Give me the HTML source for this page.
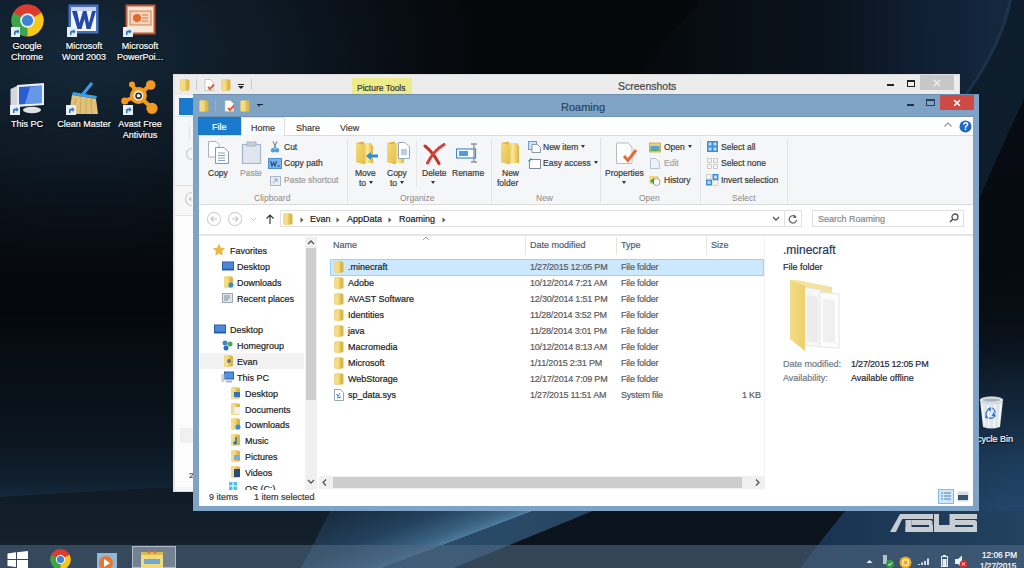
<!DOCTYPE html>
<html><head><meta charset="utf-8">
<style>
*{margin:0;padding:0;box-sizing:border-box}
html,body{width:1024px;height:568px;overflow:hidden}
body{position:relative;font-family:"Liberation Sans",sans-serif;font-size:9px;color:#1e1e1e;
background:#0a121b}
.a{position:absolute}
.bg1{left:0;top:0;width:1024px;height:568px;
background:
 linear-gradient(160deg, rgba(0,0,0,0) 0%, rgba(0,0,0,0) 100%),
 radial-gradient(ellipse 600px 300px at 1024px 568px, rgba(40,90,140,.75), rgba(20,50,80,0) 100%),
 linear-gradient(180deg,#07101a 0%,#050a10 45%,#0e1c2a 85%,#13283c 100%)}
.t{position:absolute;white-space:nowrap;line-height:1;-webkit-text-stroke:0.2px currentColor}
.dt{color:#fff;font-size:9px;text-align:center;width:70px;line-height:11px;text-shadow:0 0 2px #000,0 1px 1px #000}
/* windows */
.win{position:absolute}
.sep{position:absolute;background:#e2e3e4;width:1px}
.lbl{position:absolute;color:#8b8b8b;font-size:8.5px;white-space:nowrap;line-height:1}
.rb{position:absolute;color:#3b3b3b;font-size:8.5px;white-space:nowrap;line-height:1;-webkit-text-stroke:0.2px currentColor}
.row{position:absolute;left:330px;width:434px;height:16px}
.row .n{position:absolute;left:18px;top:3px;color:#1e1e1e}
.row .d{position:absolute;left:200px;top:3px;color:#6d6d6d}
.row .ty{position:absolute;left:290px;top:3px;color:#6d6d6d}
.fi{position:absolute;left:5px;top:3px;width:10px;height:10px}
.dd{display:inline-block;width:0;height:0;border-left:2.5px solid transparent;border-right:2.5px solid transparent;border-top:3px solid #333;vertical-align:middle;margin-left:3px;position:relative;top:-1px}
.nv{position:absolute;white-space:nowrap;color:#1e1e1e;line-height:1;-webkit-text-stroke:0.2px currentColor}
</style></head>
<body>

<svg width="0" height="0" style="position:absolute">
<defs>
 <linearGradient id="gy" x1="0" x2="1" y1="0" y2="0">
  <stop offset="0" stop-color="#e8c94f"/><stop offset=".45" stop-color="#fbe89a"/><stop offset="1" stop-color="#dcb43c"/>
 </linearGradient>
 <linearGradient id="gy2" x1="0" x2="1" y1="0" y2="1">
  <stop offset="0" stop-color="#f6dd7e"/><stop offset="1" stop-color="#e2be4a"/>
 </linearGradient>
 <symbol id="fold" viewBox="0 0 10 12">
  <path d="M0.5 1.5Q0.5 0.5 1.5 0.5H8Q9.5 0.5 9.5 2V10Q9.5 11.5 8 11.5H1.5Q0.5 11.5 0.5 10.5Z" fill="#dcb646"/>
  <path d="M0.5 1.5Q0.5 0.5 1.5 0.5H5V11.5H1.5Q0.5 11.5 0.5 10.5Z" fill="#f3dc84"/>
  <path d="M5 0.5H6.5V11.5H5Z" fill="#e9cb62"/>
 </symbol>
 <symbol id="docred" viewBox="0 0 11 12">
  <path d="M1 0.5H6.5L9.5 3.5V11.5H1Z" fill="#fff" stroke="#bdbdbd" stroke-width=".8"/>
  <path d="M4 8L6 10L10 5.5" stroke="#e0603a" stroke-width="2" fill="none"/>
 </symbol>
 <symbol id="copyic" viewBox="0 0 24 25">
  <path d="M1.5 1.5H9L12 4.5V17H1.5Z" fill="#fff" stroke="#a9b2bc" stroke-width="1"/>
  <path d="M8.5 7.5H17L21.5 12V23.5H8.5Z" fill="#fff" stroke="#8b98a6" stroke-width="1"/>
  <path d="M11 13H18M11 15.5H18M11 18H18M11 20.5H18" stroke="#7fa4cf" stroke-width="1"/>
 </symbol>
 <symbol id="pasteic" viewBox="0 0 21 23">
  <rect x="1.5" y="3.5" width="18" height="19" fill="#dfe6f0" stroke="#a7b6c8" stroke-width="1.2"/>
  <rect x="6" y="1" width="9" height="4" fill="#c5cfdc" stroke="#a7b6c8" stroke-width="1"/>
 </symbol>
 <symbol id="cutic" viewBox="0 0 10 12">
  <path d="M3 0.5L6 7M7 0.5L4 7" stroke="#7f8e9c" stroke-width="1.2"/>
  <circle cx="3" cy="9.3" r="2.2" fill="#4f9fd9"/><circle cx="7" cy="9.3" r="2.2" fill="#4f9fd9"/>
 </symbol>
 <symbol id="cpathic" viewBox="0 0 14 11">
  <rect x="0.5" y="0.5" width="13" height="10" fill="#7fb2e5" stroke="#4a8fd0"/>
  <path d="M2.5 3L4 8L5.5 4.5L7 8L8.5 3" stroke="#1f4f8a" stroke-width="1.1" fill="none"/>
  <path d="M9.5 8H12" stroke="#1f4f8a"/>
 </symbol>
 <symbol id="pshortic" viewBox="0 0 11 11">
  <rect x="0.5" y="1.5" width="10" height="9" fill="#e8edf3" stroke="#a7b6c8"/>
  <path d="M3 8L7 4M4.5 4H7V6.5" stroke="#8b9cb0" fill="none"/>
 </symbol>
 <symbol id="bigfold" viewBox="0 0 20 24">
  <path d="M1 2L9 0.5V23L1 21Z" fill="#dab43f"/>
  <path d="M8 2H17L19 5V22H8Z" fill="url(#gy)"/>
  <path d="M1 2L10 4V23.5L1 21Z" fill="url(#gy2)"/>
 </symbol>
 <symbol id="moveic" viewBox="0 0 24 24">
  <path d="M1 2L9 0.5V23L1 21Z" fill="#dab43f"/>
  <path d="M8 2H16L18 5V22H8Z" fill="url(#gy)"/>
  <path d="M1 2L10 4V23.5L1 21Z" fill="url(#gy2)"/>
  <path d="M11 15L16 11V13.5H23V16.5H16V19Z" fill="#2b8fd8"/>
 </symbol>
 <symbol id="copytoic" viewBox="0 0 25 24">
  <path d="M1 2L9 0.5V23L1 21Z" fill="#dab43f"/>
  <path d="M8 2H16L18 5V22H8Z" fill="url(#gy)"/>
  <path d="M1 2L10 4V23.5L1 21Z" fill="url(#gy2)"/>
  <path d="M12.5 1.5H19L23.5 6V17.5H12.5Z" fill="#fff" stroke="#9aa6b3"/>
  <path d="M15 9H21M15 11H21M15 13H21" stroke="#6b9cd0"/>
 </symbol>
 <symbol id="delic" viewBox="0 0 23 22">
  <path d="M2 3C7 7 12 13 16 20.5" stroke="#c8322c" stroke-width="3" fill="none" stroke-linecap="round"/>
  <path d="M21 1.5C15 5 9 11 4.5 20" stroke="#d8413a" stroke-width="3" fill="none" stroke-linecap="round"/>
 </symbol>
 <symbol id="renic" viewBox="0 0 24 20">
  <rect x="0.5" y="6" width="19" height="9" fill="#fff" stroke="#3d8fd3" stroke-width="1.2"/>
  <rect x="3" y="8" width="9" height="5" fill="#4a9ee0"/>
  <path d="M15 1H21M18 1V19M15 19H21" stroke="#8d9399" stroke-width="1.4"/>
 </symbol>
 <symbol id="newitemic" viewBox="0 0 13 12">
  <rect x="0.5" y="0.5" width="8" height="8" fill="#cfe2f3" stroke="#6f9fcc"/>
  <path d="M4 3.5H9.5L12.5 6.5V11.5H4Z" fill="#fff" stroke="#8b98a6"/>
 </symbol>
 <symbol id="easyic" viewBox="0 0 13 11">
  <path d="M3 1.5H12.5V10.5H1.5V4" fill="#fff" stroke="#7c8a98"/>
  <path d="M0.5 3.5L3.5 0.5" stroke="#2b7fc9" stroke-width="1.4"/>
 </symbol>
 <symbol id="propic" viewBox="0 0 23 23">
  <path d="M1.5 1H13L17 5V21.5H1.5Z" fill="#fff" stroke="#b8bcc0"/>
  <path d="M9 14L13 18.5L21 8" stroke="#e56a3a" stroke-width="3" fill="none"/>
 </symbol>
 <symbol id="openic" viewBox="0 0 12 11">
  <rect x="0.5" y="1" width="11" height="9" fill="#e9d27a" stroke="#c2a444" stroke-width=".8"/>
  <rect x="1.5" y="4" width="9" height="5" fill="#5aa0d8"/>
  <path d="M1.5 9L4 6L6 8L8 6L10.5 9Z" fill="#5fae55"/>
 </symbol>
 <symbol id="editic" viewBox="0 0 10 11">
  <path d="M0.5 0.5H6L9.5 4V10.5H0.5Z" fill="#eef1f6" stroke="#b7c4d6"/>
 </symbol>
 <symbol id="histic" viewBox="0 0 12 11">
  <rect x="0.5" y="1" width="9" height="8" fill="#ead57c"/>
  <circle cx="7.5" cy="7" r="3.5" fill="#fff" stroke="#9aa3ab"/>
  <path d="M1 6L5 3V9Z" fill="#3aa13a"/>
 </symbol>
 <symbol id="selallic" viewBox="0 0 11 11">
  <rect x="0" y="0" width="11" height="11" fill="#3c8fd6"/>
  <path d="M1.5 1.5H4.5V4.5H1.5ZM6.5 1.5H9.5V4.5H6.5ZM1.5 6.5H4.5V9.5H1.5ZM6.5 6.5H9.5V9.5H6.5Z" fill="#bcdcf5"/>
 </symbol>
 <symbol id="selnoneic" viewBox="0 0 11 11">
  <path d="M0.5 0.5H4.5V4.5H0.5ZM6.5 0.5H10.5V4.5H6.5ZM0.5 6.5H4.5V10.5H0.5ZM6.5 6.5H10.5V10.5H6.5Z" fill="none" stroke="#c9c9c9"/>
 </symbol>
 <symbol id="invic" viewBox="0 0 13 12">
  <rect x="0" y="5.5" width="6" height="6" fill="#3c8fd6"/><rect x="6.5" y="0" width="6" height="6" fill="#3c8fd6"/>
  <rect x="1.5" y="7" width="3" height="3" fill="#bcdcf5"/><rect x="8" y="1.5" width="3" height="3" fill="#bcdcf5"/>
  <path d="M0.5 0.5H5V5H0.5ZM7 6.5H12V11.5H7Z" fill="none" stroke="#cfcfcf"/>
 </symbol>

 <symbol id="detfold" viewBox="0 0 56 74">
  <linearGradient id="dfl" x1="0" y1="0" x2="1" y2="0"><stop offset="0" stop-color="#f3dc86"/><stop offset="1" stop-color="#ecd06e"/></linearGradient>
  <path d="M3 1L10 1L45 8V60H3Z" fill="#f4e2a0"/>
  <path d="M17 8L34 11V68L17 66Z" fill="#f7f7f7" stroke="#e2e2e2" stroke-width=".8"/>
  <path d="M20 16L31 18V64L20 62Z" fill="#ececec"/>
  <path d="M33 13L52 15V69L33 68Z" fill="#fdfdfd" stroke="#dedede" stroke-width=".8"/>
  <path d="M36 20L48 21V64L36 63Z" fill="#f0f0f0"/>
  <path d="M3 1L18 7V72L3 60Z" fill="url(#dfl)"/>
 </symbol>
</defs>
</svg>
<svg class="a" style="left:0;top:0" width="1024" height="568">
 <defs>
  <linearGradient id="bgv" x1="0" y1="0" x2="0" y2="1">
   <stop offset="0" stop-color="#05080b"/><stop offset=".25" stop-color="#05080c"/><stop offset=".55" stop-color="#05090d"/><stop offset=".8" stop-color="#0c1722"/><stop offset="1" stop-color="#13212e"/>
  </linearGradient>
  <radialGradient id="bgtl" cx="0" cy="0" r="1" gradientUnits="userSpaceOnUse" gradientTransform="translate(80 50) scale(400 230)">
   <stop offset="0" stop-color="#15293a" stop-opacity="1"/><stop offset=".5" stop-color="#11202e" stop-opacity=".7"/><stop offset="1" stop-color="#0e1a26" stop-opacity="0"/>
  </radialGradient>
  <radialGradient id="bgbr" cx="0" cy="0" r="1" gradientUnits="userSpaceOnUse" gradientTransform="translate(1024 560) scale(260 300)">
   <stop offset="0" stop-color="#27507a" stop-opacity="1"/><stop offset=".6" stop-color="#1b3856" stop-opacity=".7"/><stop offset="1" stop-color="#0a1520" stop-opacity="0"/>
  </radialGradient>
  <linearGradient id="hz" x1="0" y1="0" x2="0" y2="1">
   <stop offset="0" stop-color="#16304a" stop-opacity="0"/><stop offset=".7" stop-color="#16304a" stop-opacity=".25"/><stop offset="1" stop-color="#1a3550" stop-opacity=".55"/>
  </linearGradient>
  <linearGradient id="trg" x1="0" y1="0" x2="1" y2="0">
   <stop offset="0" stop-color="#0f1e2d" stop-opacity="0"/><stop offset=".55" stop-color="#0f1e2d" stop-opacity=".55"/><stop offset=".75" stop-color="#11223a" stop-opacity=".85"/><stop offset="1" stop-color="#15293d" stop-opacity="1"/>
  </linearGradient>
  <linearGradient id="drk" gradientUnits="userSpaceOnUse" x1="0" y1="100" x2="0" y2="470">
   <stop offset="0" stop-color="#070c12" stop-opacity="1"/><stop offset=".5" stop-color="#070c12" stop-opacity=".8"/><stop offset="1" stop-color="#070c12" stop-opacity="0"/>
  </linearGradient>
  <linearGradient id="blw" x1="0" y1="0" x2="0" y2="1">
   <stop offset="0" stop-color="#0e1822"/><stop offset="1" stop-color="#13212d"/>
  </linearGradient>
  <linearGradient id="wedge" gradientUnits="userSpaceOnUse" x1="506" y1="441" x2="533" y2="511">
   <stop offset="0" stop-color="#172a3c"/><stop offset=".55" stop-color="#23405c"/><stop offset=".88" stop-color="#3b6383"/><stop offset="1" stop-color="#4f7c9e"/>
  </linearGradient>
  <linearGradient id="band2" x1="0" y1="0" x2="1" y2="0">
   <stop offset="0" stop-color="#2c4e6c"/><stop offset="1" stop-color="#264561"/>
  </linearGradient>
  <linearGradient id="rgt" x1="0" y1="0" x2="1" y2="0">
   <stop offset="0" stop-color="#183250"/><stop offset="1" stop-color="#22425f"/>
  </linearGradient>
 </defs>
 <rect width="1024" height="568" fill="url(#bgv)"/>
 <rect width="1024" height="568" fill="url(#bgtl)"/>
 <rect width="1024" height="568" fill="url(#bgbr)"/>
 <path d="M0 440H200V486Q100 491 0 497Z" fill="url(#hz)"/>
 <path d="M0 497Q100 491 200 486L330 470L330 545H0Z" fill="url(#blw)"/>
 <path d="M0 545H330L300 568H0Z" fill="#0f1a24"/>
 <path d="M409 480L330 511L313 545L301 568H382L443 545L533 511Z" fill="url(#wedge)"/>
 <path d="M533 511L443 545L382 568H454L510 545L593 511Z" fill="url(#band2)"/>
 <path d="M593 511L510 545L454 568H800L818 545L845 511Z" fill="#0b131c"/>
 <path d="M845 511L818 545L800 568H1024V511Z" fill="url(#rgt)"/>
 <path d="M700 0H1011Q1000 45 967 94H620Z" fill="url(#trg)"/>
 <path d="M1011 0Q1000 45 967 94L975 210Q1000 150 1024 100V0Z" fill="#0e1d2b"/>
 <path d="M975 210Q1000 150 1024 100V470H975Z" fill="url(#drk)"/>
 <path d="M1009 0Q1000 45 965 94L968 94Q1003 45 1012 0Z" fill="#1f3d58" opacity=".7"/>
</svg>

<!-- desktop icons -->
<div id="desk">
<svg class="a" style="left:11px;top:4px" width="33" height="33" viewBox="0 0 33 33">
 <circle cx="16.5" cy="16.5" r="16" fill="#dc3c2e"/>
 <path d="M16.5 16.5L2.6 8.5A16 16 0 0 0 16.5 32.5Z" fill="#3ba54a"/>
 <path d="M16.5 16.5L30.4 8.5A16 16 0 0 1 16.5 32.5Z" fill="#f6c81c"/>
 <path d="M16.5 16.5L2.6 8.5A16 16 0 0 1 30.4 8.5Z" fill="#dc3c2e"/>
 <circle cx="16.5" cy="16.5" r="7.3" fill="#f2f2f2"/>
 <circle cx="16.5" cy="16.5" r="5.6" fill="#3d84d6"/>
</svg>
<div class="a" style="left:11px;top:27px;width:9px;height:10px;background:#e8eef5"></div>
<svg class="a" style="left:12px;top:28px" width="8" height="8"><path d="M2 7V4.5Q2 2.5 4 2.5H5.5V1L7.5 3.5L5.5 6V4.5H4Q3.5 4.5 3.5 5V7Z" fill="#2a6fc4"/></svg>
<div class="t dt" style="left:-8px;top:41px">Google<br>Chrome</div>

<svg class="a" style="left:68px;top:4px" width="31" height="30" viewBox="0 0 31 30">
 <rect x="0.5" y="0.5" width="30" height="29" fill="#4a6fc0"/>
 <rect x="3" y="3" width="25" height="24" fill="#f4f7fc"/>
 <rect x="3" y="3" width="25" height="4" fill="#c9d6ef"/>
 <path d="M4 7H9L11.5 19L15 7H18.5L21 19L24 7H28L22.5 25H18.5L16.5 15L13.5 25H9.5Z" fill="#2447a8"/>
</svg>
<div class="a" style="left:67px;top:27px;width:10px;height:10px;background:#e8eef5"></div>
<svg class="a" style="left:68px;top:28px" width="8" height="8"><path d="M2 7V4.5Q2 2.5 4 2.5H5.5V1L7.5 3.5L5.5 6V4.5H4Q3.5 4.5 3.5 5V7Z" fill="#2a6fc4"/></svg>
<div class="t dt" style="left:49px;top:41px">Microsoft<br>Word 2003</div>

<svg class="a" style="left:125px;top:4px" width="31" height="31" viewBox="0 0 31 31">
 <rect x="0.5" y="0.5" width="30" height="30" fill="#c8572c"/>
 <rect x="2.5" y="2.5" width="26" height="26" fill="#f6e6d8"/>
 <rect x="5" y="7" width="21" height="14" fill="#f3d2bb" stroke="#d27d4f"/>
 <circle cx="12" cy="14" r="4" fill="#e2682f"/>
 <path d="M17 11H23M17 14H23M17 17H23" stroke="#d27d4f"/>
</svg>
<div class="a" style="left:123px;top:27px;width:10px;height:10px;background:#e8eef5"></div>
<svg class="a" style="left:124px;top:28px" width="8" height="8"><path d="M2 7V4.5Q2 2.5 4 2.5H5.5V1L7.5 3.5L5.5 6V4.5H4Q3.5 4.5 3.5 5V7Z" fill="#2a6fc4"/></svg>
<div class="t dt" style="left:105px;top:41px">Microsoft<br>PowerPoi...</div>

<svg class="a" style="left:10px;top:83px" width="35" height="31" viewBox="0 0 35 31">
 <path d="M0.5 6L7 3V27L0.5 29Z" fill="#d4d8dc"/>
 <path d="M7 2L34 0V22L7 24Z" fill="#e9eef2"/>
 <path d="M9 4L32 2.5V20L9 21.5Z" fill="#2b5fd0"/>
 <path d="M20 4L32 2.5V20L15 21Z" fill="#7fb0f0" opacity=".7"/>
 <ellipse cx="22" cy="27" rx="9" ry="3.2" fill="#dfe3e6"/>
</svg>
<div class="a" style="left:10px;top:105px;width:10px;height:10px;background:#e8eef5"></div>
<svg class="a" style="left:11px;top:106px" width="8" height="8"><path d="M2 7V4.5Q2 2.5 4 2.5H5.5V1L7.5 3.5L5.5 6V4.5H4Q3.5 4.5 3.5 5V7Z" fill="#2a6fc4"/></svg>
<div class="t dt" style="left:-8px;top:119px">This PC</div>

<svg class="a" style="left:67px;top:82px" width="32" height="33" viewBox="0 0 32 33">
 <path d="M25 1L16 12" stroke="#3b9ee6" stroke-width="3"/>
 <path d="M6 10L30 14L29 17L5 13Z" fill="#3b9ee6"/>
 <path d="M5 13L29 17L31 32H2Z" fill="#e2c27a"/>
 <path d="M9 16L7 32M14 16L13 32M19 17L19 32M24 17L25 32" stroke="#c9a35a" stroke-width="1"/>
</svg>
<div class="a" style="left:66px;top:105px;width:10px;height:10px;background:#e8eef5"></div>
<svg class="a" style="left:67px;top:106px" width="8" height="8"><path d="M2 7V4.5Q2 2.5 4 2.5H5.5V1L7.5 3.5L5.5 6V4.5H4Q3.5 4.5 3.5 5V7Z" fill="#2a6fc4"/></svg>
<div class="t dt" style="left:49px;top:119px">Clean Master</div>

<svg class="a" style="left:121px;top:80px" width="37" height="36" viewBox="0 0 37 36">
 <g fill="#f39a22">
  <path d="M17.4 15.6L11 4.5M17.4 15.6L29.7 4.5M17.4 15.6L3.5 21M17.4 15.6L31.2 28.3" stroke="#f39a22" stroke-width="4" fill="none"/>
  <circle cx="11" cy="4.5" r="3"/>
  <circle cx="29.7" cy="5" r="4.8"/>
  <circle cx="3.8" cy="21" r="3.6"/>
  <circle cx="31" cy="28.3" r="5.6"/>
  <circle cx="17.4" cy="15.6" r="8.5"/>
 </g>
 <circle cx="17.4" cy="15.6" r="5" fill="#f4f0e8"/>
 <circle cx="17.6" cy="15.8" r="2.6" fill="none" stroke="#2d2d2d" stroke-width="1.6"/>
</svg>
<div class="a" style="left:123px;top:105px;width:10px;height:10px;background:#e8eef5"></div>
<svg class="a" style="left:124px;top:106px" width="8" height="8"><path d="M2 7V4.5Q2 2.5 4 2.5H5.5V1L7.5 3.5L5.5 6V4.5H4Q3.5 4.5 3.5 5V7Z" fill="#2a6fc4"/></svg>
<div class="t dt" style="left:105px;top:119px">Avast Free<br>Antivirus</div>

<svg class="a" style="left:979px;top:396px" width="25" height="34" viewBox="0 0 25 34">
 <path d="M1 4L4 31Q12.5 34 21 31L24 4Q12.5 7.5 1 4Z" fill="#dfe5ea"/>
 <path d="M3 8L5.5 30M9 9L10 31.5M16 9L15 31.5M22 8L19.5 30" stroke="#f7f9fb" stroke-width="1.4"/>
 <ellipse cx="12.5" cy="4" rx="11.5" ry="3.2" fill="#eef2f5" stroke="#b8c2ca" stroke-width=".8"/>
 <ellipse cx="12.5" cy="4" rx="9" ry="1.8" fill="#a9b4bd"/>
 <path d="M8 13L12 11L11.5 15.5ZM15 16L17 20.5L12.5 20ZM7 18L9.5 22.5L6 22Z" fill="#2f6fd0"/>
 <path d="M9 14Q6 17 7.5 20M13 12Q16 13 16 17M10 22Q14 23 16 20" stroke="#3a7ad6" stroke-width="1.3" fill="none"/>
</svg>
<div class="t dt" style="left:960px;top:434px">cycle Bin</div>
</div>


<svg class="a" style="left:889px;top:513px" width="90" height="20" viewBox="0 0 90 20">
 <g fill="#c8cdd3">
  <path d="M1 19H7L15.6 1H11Z"/>
  <path d="M13 1H44V6H10.6Z"/>
  <path d="M16.5 7H22.5V19H16.5Z"/>
  <path d="M22.5 7H41Q43.5 7 43.5 9.5V12H22.5Z"/>
  <path d="M40 12H44V14H40Z"/>
  <path d="M16.5 14H44V19H16.5Z"/>
  <path d="M45 1H50V19H45Z"/>
  <path d="M45 12H66V19H45Z"/>
  <path d="M60.5 1H66V19H60.5Z"/>
  <path d="M61.5 1H88V6H61.5Z"/>
  <path d="M66 7H85.5Q88 7 88 9.5V12H66Z"/>
  <path d="M84 12H88V14H84Z"/>
  <path d="M61.5 14H88V19H61.5Z"/>
 </g>
</svg>
<!-- back window -->
<div class="a" style="left:173px;top:74px;width:787px;height:418px;background:#f7f7f7;border:1px solid #dcdcdc;border-left:2px solid #e4e4e4"></div>
<div class="a" style="left:175px;top:75px;width:784px;height:20px;background:#ececec"></div>
<svg class="a" style="left:180px;top:79px" width="10" height="12"><use href="#fold"/></svg>
<div class="a" style="left:196px;top:79px;width:1px;height:11px;background:#c9c9c9"></div>
<svg class="a" style="left:204px;top:79px" width="11" height="12"><use href="#docred"/></svg>
<svg class="a" style="left:221px;top:79px" width="10" height="12"><use href="#fold"/></svg>
<div class="a" style="left:238px;top:84px;width:6px;height:1px;background:#222"></div>
<svg class="a" style="left:238px;top:86px" width="6" height="4"><path d="M0 0H6L3 3Z" fill="#222"/></svg>
<div class="a" style="left:251px;top:79px;width:1px;height:11px;background:#c9c9c9"></div>
<div class="a" style="left:352px;top:78px;width:60px;height:16px;background:#eeec8a"></div>
<div class="t" style="left:357px;top:84px;font-size:8.5px;color:#333">Picture Tools</div>
<div class="t" style="left:618px;top:81px;font-size:10.5px;color:#444">Screenshots</div>
<div class="a" style="left:887px;top:84px;width:7px;height:2px;background:#222"></div>
<div class="a" style="left:907px;top:80px;width:8px;height:7px;border:1px solid #222;border-top-width:2px"></div>
<div class="a" style="left:920px;top:75px;width:34px;height:15px;background:#c7c7c7"></div>
<svg class="a" style="left:932px;top:78px" width="10" height="10"><path d="M2 2L8 8M8 2L2 8" stroke="#ececec" stroke-width="1.6"/></svg>
<div class="a" style="left:179px;top:98px;width:14px;height:17px;background:#1979ca"></div>
<div class="a" style="left:175px;top:116px;width:18px;height:1px;background:#e0e0e0"></div>
<div class="a" style="left:175px;top:117px;width:18px;height:68px;background:#f5f6f7"></div>
<div class="a" style="left:189px;top:126px;width:1px;height:14px;background:#e2e2e2"></div>
<svg class="a" style="left:184px;top:147px" width="9" height="14"><path d="M8 1.5A5.5 5.5 0 0 0 8 12.5" stroke="#c9c9c9" stroke-width="1.2" fill="none"/></svg>
<div class="a" style="left:175px;top:185px;width:18px;height:1px;background:#e0e0e0"></div>
<svg class="a" style="left:182px;top:191px" width="11" height="16"><path d="M10 1.5A6.5 6.5 0 0 0 10 14.5" stroke="#cfcfcf" stroke-width="1.2" fill="none"/><path d="M10 8H7M9 6L7 8L9 10" stroke="#c0c0c0" fill="none"/></svg>
<div class="a" style="left:175px;top:215px;width:18px;height:1px;background:#e6e6e6"></div>
<div class="a" style="left:175px;top:216px;width:18px;height:275px;background:#fcfcfc"></div>
<div class="a" style="left:180px;top:428px;width:13px;height:15px;background:#f0f0f0"></div>
<div class="t" style="left:189px;top:472px;font-size:8px;color:#444">2</div>
<div class="a" style="left:175px;top:487px;width:18px;height:4px;background:#f4f4f4"></div>
<!-- front window -->
<div class="win" id="front" style="left:193px;top:94px;width:786px;height:417px;background:#7ea3c5"></div>
<div class="a" style="left:193px;top:94px;width:786px;height:1px;background:#6f8fae"></div>
<div class="a" style="left:199px;top:116px;width:774px;height:1px;background:#7393b2"></div>
<div class="a" style="left:199px;top:117px;width:774px;height:389px;background:#fff"></div>
<!-- quick access -->
<svg class="a" style="left:199px;top:100px" width="10" height="12"><use href="#fold"/></svg>
<div class="a" style="left:215px;top:100px;width:1px;height:11px;background:#93b0cc"></div>
<svg class="a" style="left:224px;top:100px" width="11" height="12"><use href="#docred"/></svg>
<svg class="a" style="left:240px;top:100px" width="10" height="12"><use href="#fold"/></svg>
<div class="t" style="left:257px;top:102px;font-size:7px;color:#1a1a1a"><i class="dd" style="margin-left:0"></i></div>
<div class="a" style="left:257px;top:104px;width:6px;height:1px;background:#222"></div>
<div class="t" style="left:561px;top:101.5px;font-size:11px;color:#2a4460">Roaming</div>
<div class="a" style="left:907px;top:104px;width:7px;height:2px;background:#1f3347"></div>
<div class="a" style="left:926px;top:99px;width:9px;height:7px;border:1px solid #2a3f55;border-top-width:2px"></div>
<div class="a" style="left:940px;top:95px;width:34px;height:15px;background:#cf4a45"></div>
<svg class="a" style="left:952px;top:98px" width="10" height="10"><path d="M2.2 2.2L7.8 7.8M7.8 2.2L2.2 7.8" stroke="#fff" stroke-width="1.6"/></svg>
<!-- tabs -->
<div class="a" style="left:198px;top:117px;width:43px;height:18px;background:#1979ca"></div>
<div class="t" style="left:212px;top:123px;color:#fff;font-size:9px">File</div>
<div class="a" style="left:241px;top:117px;width:44px;height:19px;background:#fafbfc;border:1px solid #dfe0e1;border-bottom:none"></div>
<div class="t" style="left:251px;top:124px;color:#444;font-size:9px">Home</div>
<div class="t" style="left:296px;top:124px;color:#444;font-size:9px">Share</div>
<div class="t" style="left:340px;top:124px;color:#444;font-size:9px">View</div>
<svg class="a" style="left:943px;top:121px" width="10" height="7"><path d="M1.5 5.5L5 2L8.5 5.5" stroke="#a0a0a0" stroke-width="1.4" fill="none"/></svg>
<svg class="a" style="left:959px;top:120px" width="13" height="13"><circle cx="6.5" cy="6.5" r="6" fill="#1b6ac4"/><text x="6.5" y="10.3" font-size="10" font-weight="bold" fill="#fff" text-anchor="middle" font-family="Liberation Sans">?</text></svg>
<!-- ribbon -->
<div class="a" style="left:199px;top:135px;width:774px;height:70px;background:#f5f6f7;border-top:1px solid #dadbdc;border-bottom:1px solid #dadbdc"></div>
<div class="a" style="left:242px;top:135px;width:42px;height:1px;background:#f5f6f7"></div>
<div class="sep" style="left:347px;top:138px;height:64px"></div>
<div class="sep" style="left:491px;top:138px;height:64px"></div>
<div class="sep" style="left:600px;top:138px;height:64px"></div>
<div class="sep" style="left:700px;top:138px;height:64px"></div>
<div class="sep" style="left:787px;top:138px;height:64px"></div>
<div class="sep" style="left:416px;top:141px;height:46px;background:#e6e7e8"></div>
<!-- clipboard -->
<svg class="a" style="left:207px;top:140px" width="24" height="25"><use href="#copyic"/></svg>
<div class="rb" style="left:208px;top:169px">Copy</div>
<svg class="a" style="left:241px;top:141px" width="21" height="23"><use href="#pasteic"/></svg>
<div class="rb" style="left:240px;top:169px;color:#9d9d9d">Paste</div>
<svg class="a" style="left:270px;top:141px" width="10" height="12"><use href="#cutic"/></svg>
<div class="rb" style="left:284px;top:143px">Cut</div>
<svg class="a" style="left:268px;top:158px" width="14" height="11"><use href="#cpathic"/></svg>
<div class="rb" style="left:284px;top:159px">Copy path</div>
<svg class="a" style="left:270px;top:175px" width="11" height="11"><use href="#pshortic"/></svg>
<div class="rb" style="left:284px;top:176px;color:#9d9d9d">Paste shortcut</div>
<div class="lbl" style="left:254px;top:194px">Clipboard</div>
<!-- organize -->
<svg class="a" style="left:355px;top:141px" width="24" height="24"><use href="#moveic"/></svg>
<div class="rb" style="left:355px;top:169px">Move</div>
<div class="rb" style="left:359px;top:179px">to<i class="dd"></i></div>
<svg class="a" style="left:386px;top:141px" width="25" height="24"><use href="#copytoic"/></svg>
<div class="rb" style="left:387px;top:169px">Copy</div>
<div class="rb" style="left:390px;top:179px">to<i class="dd"></i></div>
<svg class="a" style="left:423px;top:143px" width="23" height="22"><use href="#delic"/></svg>
<div class="rb" style="left:422px;top:169px">Delete</div>
<div class="rb" style="left:431px;top:179px"><i class="dd" style="margin-left:0"></i></div>
<svg class="a" style="left:456px;top:143px" width="24" height="20"><use href="#renic"/></svg>
<div class="rb" style="left:452px;top:169px">Rename</div>
<div class="lbl" style="left:400px;top:194px">Organize</div>
<!-- new -->
<svg class="a" style="left:500px;top:141px" width="20" height="24"><use href="#bigfold"/></svg>
<div class="rb" style="left:502px;top:169px">New</div>
<div class="rb" style="left:497px;top:179px">folder</div>
<svg class="a" style="left:528px;top:141px" width="13" height="12"><use href="#newitemic"/></svg>
<div class="rb" style="left:543px;top:143px">New item<i class="dd"></i></div>
<svg class="a" style="left:528px;top:158px" width="13" height="11"><use href="#easyic"/></svg>
<div class="rb" style="left:543px;top:159px">Easy access<i class="dd"></i></div>
<div class="lbl" style="left:536px;top:194px">New</div>
<!-- open -->
<svg class="a" style="left:615px;top:142px" width="23" height="23"><use href="#propic"/></svg>
<div class="rb" style="left:605px;top:169px">Properties</div>
<div class="rb" style="left:622px;top:179px"><i class="dd" style="margin-left:0"></i></div>
<svg class="a" style="left:649px;top:142px" width="12" height="11"><use href="#openic"/></svg>
<div class="rb" style="left:664px;top:143px">Open<i class="dd"></i></div>
<svg class="a" style="left:650px;top:158px" width="10" height="11"><use href="#editic"/></svg>
<div class="rb" style="left:664px;top:159px;color:#a3a3a3">Edit</div>
<svg class="a" style="left:649px;top:175px" width="12" height="11"><use href="#histic"/></svg>
<div class="rb" style="left:664px;top:176px">History</div>
<div class="lbl" style="left:639px;top:194px">Open</div>
<!-- select -->
<svg class="a" style="left:707px;top:141px" width="11" height="11"><use href="#selallic"/></svg>
<div class="rb" style="left:721px;top:143px">Select all</div>
<svg class="a" style="left:707px;top:158px" width="11" height="11"><use href="#selnoneic"/></svg>
<div class="rb" style="left:721px;top:159px">Select none</div>
<svg class="a" style="left:706px;top:174px" width="13" height="12"><use href="#invic"/></svg>
<div class="rb" style="left:721px;top:176px">Invert selection</div>
<div class="lbl" style="left:732px;top:194px">Select</div>



<!-- address row -->
<svg class="a" style="left:206px;top:211px" width="16" height="16"><circle cx="8" cy="8" r="6.6" fill="none" stroke="#d3d3d3" stroke-width="1.1"/><path d="M11 8H5M7.5 5.5L5 8L7.5 10.5" stroke="#c6c6c6" stroke-width="1.1" fill="none"/></svg>
<svg class="a" style="left:227px;top:211px" width="16" height="16"><circle cx="8" cy="8" r="6.6" fill="none" stroke="#d3d3d3" stroke-width="1.1"/><path d="M5 8H11M8.5 5.5L11 8L8.5 10.5" stroke="#c6c6c6" stroke-width="1.1" fill="none"/></svg>
<svg class="a" style="left:250px;top:217px" width="7" height="5"><path d="M1 1L3.5 3.5L6 1" stroke="#c9c9c9" fill="none"/></svg>
<svg class="a" style="left:265px;top:213px" width="10" height="12"><path d="M5 11V2M1.5 5.5L5 2L8.5 5.5" stroke="#3a3a3a" stroke-width="1.2" fill="none"/></svg>
<div class="a" style="left:280px;top:210px;width:522px;height:17px;border:1px solid #e0e0e0;background:#fff"></div>
<svg class="a" style="left:283px;top:213px" width="10" height="12"><use href="#fold"/></svg>
<svg class="a" style="left:300px;top:217px" width="4" height="6"><path d="M0.5 0.5L3.5 3L0.5 5.5Z" fill="#555"/></svg>
<div class="t" style="left:310px;top:215px;color:#1e1e1e">Evan</div>
<svg class="a" style="left:336px;top:217px" width="4" height="6"><path d="M0.5 0.5L3.5 3L0.5 5.5Z" fill="#555"/></svg>
<div class="t" style="left:347px;top:215px;color:#1e1e1e">AppData</div>
<svg class="a" style="left:388px;top:217px" width="4" height="6"><path d="M0.5 0.5L3.5 3L0.5 5.5Z" fill="#555"/></svg>
<div class="t" style="left:399px;top:215px;color:#1e1e1e">Roaming</div>
<svg class="a" style="left:442px;top:217px" width="4" height="6"><path d="M0.5 0.5L3.5 3L0.5 5.5Z" fill="#555"/></svg>
<svg class="a" style="left:772px;top:216px" width="8" height="6"><path d="M1 1L4 4L7 1" stroke="#555" stroke-width="1.3" fill="none"/></svg>
<div class="a" style="left:784px;top:211px;width:1px;height:15px;background:#e3e3e3"></div>
<svg class="a" style="left:787px;top:213px" width="12" height="12"><path d="M9 4.2A3.7 3.7 0 1 0 9.6 7" stroke="#666" stroke-width="1.3" fill="none"/><path d="M7 1.5L9.8 4.5L6.3 5.2Z" fill="#666"/></svg>
<div class="a" style="left:812px;top:210px;width:152px;height:17px;border:1px solid #e0e0e0;background:#fff"></div>
<div class="t" style="left:818px;top:215px;color:#8a8a8a">Search Roaming</div>
<svg class="a" style="left:948px;top:212px" width="12" height="12"><circle cx="7" cy="5" r="3" fill="none" stroke="#555" stroke-width="1.3"/><path d="M5 7L2 10" stroke="#555" stroke-width="1.6"/></svg>
<div class="a" style="left:199px;top:234px;width:774px;height:2px;background:#e6e6e6"></div>
<!-- nav pane -->
<div class="a" style="left:305px;top:237px;width:12px;height:253px;background:#f0f0f0"></div>
<svg class="a" style="left:306px;top:239px" width="10" height="7"><path d="M2 5L5 2L8 5" stroke="#555" stroke-width="1.3" fill="none"/></svg>
<div class="a" style="left:306px;top:248px;width:10px;height:152px;background:#cdcdcd"></div>
<svg class="a" style="left:306px;top:478px" width="10" height="7"><path d="M2 2L5 5L8 2" stroke="#555" stroke-width="1.3" fill="none"/></svg>
<div class="a" style="left:200px;top:353px;width:104px;height:16px;background:#f2f2f2"></div>
<svg class="a" style="left:213px;top:244px" width="12" height="12"><path d="M6 0.5L7.6 4.2L11.5 4.5L8.5 7.1L9.4 11L6 8.9L2.6 11L3.5 7.1L0.5 4.5L4.4 4.2Z" fill="#f2b733" stroke="#e39b22" stroke-width=".5"/></svg>
<div class="nv" style="left:230px;top:247px">Favorites</div>
<svg class="a" style="left:222px;top:261px" width="12" height="10"><rect x="0" y="0.5" width="12" height="9" fill="#2a5fa8"/><rect x="1" y="1.5" width="10" height="6" fill="#4d8ad6"/></svg>
<div class="nv" style="left:237px;top:263px">Desktop</div>
<svg class="a" style="left:223px;top:276px" width="11" height="12"><use href="#fold"/><circle cx="8" cy="9" r="2.5" fill="#2f8fd9"/></svg>
<div class="nv" style="left:237px;top:279px">Downloads</div>
<svg class="a" style="left:222px;top:292px" width="12" height="12"><rect x="0.5" y="1.5" width="10" height="9" fill="#dfe5ea" stroke="#9fa9b3"/><path d="M2 4H8M2 6H8M2 8H6" stroke="#7e8d9b"/></svg>
<div class="nv" style="left:237px;top:295px">Recent places</div>
<svg class="a" style="left:214px;top:324px" width="12" height="10"><rect x="0" y="0.5" width="12" height="9" fill="#2a5fa8"/><rect x="1" y="1.5" width="10" height="6" fill="#4d8ad6"/></svg>
<div class="nv" style="left:230px;top:326px">Desktop</div>
<svg class="a" style="left:221px;top:339px" width="13" height="12"><circle cx="4" cy="4" r="2.5" fill="#3a87cf"/><circle cx="9" cy="5" r="2.5" fill="#4aa84a"/><circle cx="5" cy="9" r="2.5" fill="#2b6fb8"/></svg>
<div class="nv" style="left:237px;top:342px">Homegroup</div>
<svg class="a" style="left:223px;top:355px" width="11" height="12"><use href="#fold"/><circle cx="6" cy="6" r="2" fill="#6a7a8a"/></svg>
<div class="nv" style="left:237px;top:358px">Evan</div>
<svg class="a" style="left:221px;top:371px" width="13" height="12"><rect x="3" y="0.5" width="10" height="8" fill="#2460b8"/><rect x="4" y="1.5" width="8" height="6" fill="#4f93e0"/><rect x="0.5" y="3" width="3" height="8" fill="#c9d0d6"/><rect x="5" y="9.5" width="6" height="2" fill="#aab3bb"/></svg>
<div class="nv" style="left:237px;top:374px">This PC</div>
<svg class="a" style="left:230px;top:387px" width="11" height="12"><use href="#fold"/><rect x="4" y="5" width="6" height="5" fill="#3570b8"/></svg>
<div class="nv" style="left:245px;top:390px">Desktop</div>
<svg class="a" style="left:230px;top:403px" width="11" height="12"><use href="#fold"/><rect x="4" y="4" width="6" height="7" fill="#eef1f4"/></svg>
<div class="nv" style="left:245px;top:406px">Documents</div>
<svg class="a" style="left:230px;top:418px" width="11" height="12"><use href="#fold"/><circle cx="8" cy="9" r="2.5" fill="#2f8fd9"/></svg>
<div class="nv" style="left:245px;top:421px">Downloads</div>
<svg class="a" style="left:230px;top:434px" width="11" height="12"><use href="#fold"/><path d="M6 3V9" stroke="#2b6fb8" stroke-width="1.5"/><circle cx="5" cy="9" r="1.8" fill="#2b6fb8"/></svg>
<div class="nv" style="left:245px;top:437px">Music</div>
<svg class="a" style="left:230px;top:450px" width="11" height="12"><use href="#fold"/><rect x="4" y="5" width="6" height="5" fill="#7ab0d8"/></svg>
<div class="nv" style="left:245px;top:453px">Pictures</div>
<svg class="a" style="left:230px;top:466px" width="11" height="12"><use href="#fold"/><rect x="4" y="3" width="6" height="8" fill="#2c4a78"/></svg>
<div class="nv" style="left:245px;top:469px">Videos</div>
<div class="a" style="left:200px;top:478px;width:104px;height:12px;overflow:hidden">
 <svg class="a" style="left:29px;top:4px" width="9" height="9"><rect x="0" y="0" width="3.5" height="3.5" fill="#4cc3ee"/><rect x="4.5" y="0" width="3.5" height="3.5" fill="#4cc3ee"/><rect x="0" y="4.5" width="3.5" height="3.5" fill="#4cc3ee"/><rect x="4.5" y="4.5" width="3.5" height="3.5" fill="#4cc3ee"/></svg>
 <div class="nv" style="left:45px;top:7px">OS (C:)</div>
</div>
<!-- file list -->
<div class="t" style="left:333px;top:241px;color:#4f6078">Name</div>
<svg class="a" style="left:422px;top:236px" width="8" height="5"><path d="M1 4L4 1L7 4" stroke="#9aa0a6" fill="none"/></svg>
<div class="a" style="left:525px;top:237px;width:1px;height:18px;background:#e5e5e5"></div>
<div class="t" style="left:530px;top:241px;color:#4f6078">Date modified</div>
<div class="a" style="left:616px;top:237px;width:1px;height:18px;background:#e5e5e5"></div>
<div class="t" style="left:621px;top:241px;color:#4f6078">Type</div>
<div class="a" style="left:706px;top:237px;width:1px;height:18px;background:#e5e5e5"></div>
<div class="t" style="left:711px;top:241px;color:#4f6078">Size</div>
<div class="a" style="left:330px;top:259px;width:434px;height:17px;background:#cce8ff;border:1px solid #99d1ff"></div>
<svg class="a" style="left:334px;top:261px" width="10" height="12"><use href="#fold"/></svg>
<div class="t" style="left:348px;top:263px;color:#1e1e1e">.minecraft</div>
<div class="t" style="left:530px;top:263px;color:#5c5c5c;letter-spacing:-0.2px">1/27/2015 12:05 PM</div>
<div class="t" style="left:621px;top:263px;color:#5c5c5c;letter-spacing:-0.2px">File folder</div>
<svg class="a" style="left:334px;top:277px" width="10" height="12"><use href="#fold"/></svg>
<div class="t" style="left:348px;top:279px;color:#1e1e1e">Adobe</div>
<div class="t" style="left:530px;top:279px;color:#5c5c5c;letter-spacing:-0.2px">10/12/2014 7:21 AM</div>
<div class="t" style="left:621px;top:279px;color:#5c5c5c;letter-spacing:-0.2px">File folder</div>
<svg class="a" style="left:334px;top:293px" width="10" height="12"><use href="#fold"/></svg>
<div class="t" style="left:348px;top:295px;color:#1e1e1e">AVAST Software</div>
<div class="t" style="left:530px;top:295px;color:#5c5c5c;letter-spacing:-0.2px">12/30/2014 1:51 PM</div>
<div class="t" style="left:621px;top:295px;color:#5c5c5c;letter-spacing:-0.2px">File folder</div>
<svg class="a" style="left:334px;top:309px" width="10" height="12"><use href="#fold"/></svg>
<div class="t" style="left:348px;top:311px;color:#1e1e1e">Identities</div>
<div class="t" style="left:530px;top:311px;color:#5c5c5c;letter-spacing:-0.2px">11/28/2014 3:52 PM</div>
<div class="t" style="left:621px;top:311px;color:#5c5c5c;letter-spacing:-0.2px">File folder</div>
<svg class="a" style="left:334px;top:325px" width="10" height="12"><use href="#fold"/></svg>
<div class="t" style="left:348px;top:327px;color:#1e1e1e">java</div>
<div class="t" style="left:530px;top:327px;color:#5c5c5c;letter-spacing:-0.2px">11/28/2014 3:01 PM</div>
<div class="t" style="left:621px;top:327px;color:#5c5c5c;letter-spacing:-0.2px">File folder</div>
<svg class="a" style="left:334px;top:341px" width="10" height="12"><use href="#fold"/></svg>
<div class="t" style="left:348px;top:343px;color:#1e1e1e">Macromedia</div>
<div class="t" style="left:530px;top:343px;color:#5c5c5c;letter-spacing:-0.2px">10/12/2014 8:13 AM</div>
<div class="t" style="left:621px;top:343px;color:#5c5c5c;letter-spacing:-0.2px">File folder</div>
<svg class="a" style="left:334px;top:357px" width="10" height="12"><use href="#fold"/></svg>
<div class="t" style="left:348px;top:359px;color:#1e1e1e">Microsoft</div>
<div class="t" style="left:530px;top:359px;color:#5c5c5c;letter-spacing:-0.2px">1/11/2015 2:31 PM</div>
<div class="t" style="left:621px;top:359px;color:#5c5c5c;letter-spacing:-0.2px">File folder</div>
<svg class="a" style="left:334px;top:373px" width="10" height="12"><use href="#fold"/></svg>
<div class="t" style="left:348px;top:375px;color:#1e1e1e">WebStorage</div>
<div class="t" style="left:530px;top:375px;color:#5c5c5c;letter-spacing:-0.2px">12/17/2014 7:09 PM</div>
<div class="t" style="left:621px;top:375px;color:#5c5c5c;letter-spacing:-0.2px">File folder</div>
<svg class="a" style="left:334px;top:389px" width="10" height="12"><path d="M0.5 0.5H6.5L9.5 3.5V11.5H0.5Z" fill="#fff" stroke="#9aa6b3"/><path d="M2.5 5L4 7.5L6 4M3 9L7 8" stroke="#3a7cc4" fill="none"/></svg>
<div class="t" style="left:348px;top:391px;color:#1e1e1e">sp_data.sys</div>
<div class="t" style="left:530px;top:391px;color:#5c5c5c;letter-spacing:-0.2px">1/27/2015 11:51 AM</div>
<div class="t" style="left:621px;top:391px;color:#5c5c5c;letter-spacing:-0.2px">System file</div>
<div class="t" style="left:742px;top:391px;color:#5c5c5c;letter-spacing:-0.2px">1 KB</div>

<!-- h scrollbar -->
<div class="a" style="left:319px;top:476px;width:445px;height:13px;background:#f0f0f0"></div>
<svg class="a" style="left:321px;top:478px" width="8" height="9"><path d="M5 1.5L2 4.5L5 7.5" stroke="#555" stroke-width="1.3" fill="none"/></svg>
<div class="a" style="left:333px;top:477px;width:409px;height:11px;background:#cdcdcd"></div>
<svg class="a" style="left:753px;top:478px" width="8" height="9"><path d="M3 1.5L6 4.5L3 7.5" stroke="#555" stroke-width="1.3" fill="none"/></svg>
<div class="a" style="left:764px;top:237px;width:1px;height:253px;background:#f2f2f2"></div>
<!-- details pane -->
<div class="t" style="left:783px;top:244px;font-size:12px;color:#1e3a5a">.minecraft</div>
<div class="t" style="left:783px;top:263px;color:#1e2a3a">File folder</div>
<svg class="a" style="left:787px;top:279px" width="56" height="74"><use href="#detfold"/></svg>
<div class="t" style="left:783px;top:360px;color:#6d7a8a">Date modified:</div>
<div class="t" style="left:851px;top:360px;color:#1e2a3a;letter-spacing:-0.2px">1/27/2015 12:05 PM</div>
<div class="t" style="left:783px;top:374px;color:#6d7a8a">Availability:</div>
<div class="t" style="left:851px;top:374px;color:#1e2a3a">Available offline</div>
<!-- status bar -->
<div class="t" style="left:209px;top:493px;color:#3b3b3b">9 items</div>
<div class="t" style="left:254px;top:493px;color:#3b3b3b">1 item selected</div>
<div class="a" style="left:938px;top:489px;width:16px;height:15px;background:#cde8fa;border:1px solid #7fc0ea"></div>
<svg class="a" style="left:940px;top:491px" width="12" height="11"><path d="M1 2H3M1 5H3M1 8H3M4 2H11M4 5H11M4 8H11" stroke="#5a7da0"/></svg>
<svg class="a" style="left:957px;top:491px" width="12" height="11"><rect x="0.5" y="0.5" width="11" height="10" fill="#d4dde6"/><rect x="1" y="4" width="10" height="5" fill="#39566f"/></svg>

<!-- taskbar -->
<div class="a" style="left:0;top:545px;width:1024px;height:23px;background:rgba(80,104,129,.6)"></div>
<svg class="a" style="left:7px;top:551px" width="22" height="17" viewBox="0 0 22 17"><path d="M0.5 2.5L9 1.3V8H0.5ZM10 1.2L21 0V8H10ZM0.5 9H9V16L0.5 15ZM10 9H21V17H10Z" fill="#fff"/></svg>
<svg class="a" style="left:50px;top:549px" width="21" height="21" viewBox="0 0 33 33">
 <circle cx="16.5" cy="16.5" r="16" fill="#dc3c2e"/>
 <path d="M16.5 16.5L2.6 8.5A16 16 0 0 0 16.5 32.5Z" fill="#3ba54a"/>
 <path d="M16.5 16.5L30.4 8.5A16 16 0 0 1 16.5 32.5Z" fill="#f6c81c"/>
 <path d="M16.5 16.5L2.6 8.5A16 16 0 0 1 30.4 8.5Z" fill="#dc3c2e"/>
 <circle cx="16.5" cy="16.5" r="7.3" fill="#f2f2f2"/>
 <circle cx="16.5" cy="16.5" r="5.6" fill="#3d84d6"/>
</svg>
<svg class="a" style="left:97px;top:553px" width="20" height="17" viewBox="0 0 20 17"><rect x="0" y="0" width="20" height="17" fill="#8fb8d8"/><circle cx="9" cy="10" r="7" fill="#e8772e"/><path d="M7 6L13 10L7 14Z" fill="#fff"/></svg>
<div class="a" style="left:132px;top:546px;width:44px;height:22px;background:rgba(200,212,225,.42);border:1px solid rgba(215,225,235,.6)"></div>
<svg class="a" style="left:140px;top:550px" width="24" height="18" viewBox="0 0 24 18"><rect x="1" y="2" width="22" height="16" fill="#f0dc7c"/><rect x="1" y="2" width="22" height="3" fill="#d9bb4a"/><rect x="4" y="9" width="16" height="5" fill="#6fa8d8"/><circle cx="9" cy="2" r="1.5" fill="#e86a3c"/><circle cx="15" cy="2" r="1.5" fill="#e86a3c"/></svg>
<!-- tray -->
<svg class="a" style="left:866px;top:559px" width="7" height="5"><path d="M0.5 4L3.5 1L6.5 4Z" fill="#e8eef4"/></svg>
<svg class="a" style="left:882px;top:555px" width="12" height="13"><rect x="1" y="0" width="4" height="9" fill="#b7c2cc"/><circle cx="8" cy="9" r="4" fill="#2f9e3c"/><path d="M6 9L7.5 10.5L10 7.5" stroke="#fff" fill="none"/></svg>
<svg class="a" style="left:899px;top:556px" width="13" height="12"><circle cx="6.5" cy="6.5" r="6" fill="#f0a91c"/><circle cx="6.5" cy="6.5" r="3" fill="none" stroke="#fff3c8" stroke-width="1.4"/></svg>
<svg class="a" style="left:918px;top:557px" width="13" height="9"><path d="M1 8V7M4 8V5.5M7 8V4M10 8V1.5" stroke="#e8eef4" stroke-width="1.8"/></svg>
<svg class="a" style="left:941px;top:555px" width="7" height="12"><rect x="0.5" y="1.5" width="6" height="10" fill="none" stroke="#e8eef4"/><rect x="2" y="0" width="3" height="1.5" fill="#e8eef4"/><rect x="1.5" y="4" width="4" height="7" fill="#e8eef4"/></svg>
<svg class="a" style="left:954px;top:555px" width="14" height="13"><path d="M1 4H4L8 0.5V12.5L4 9H1Z" fill="#e8eef4"/><circle cx="9.5" cy="9" r="3.8" fill="#d22b2b"/><path d="M8 7.5L11 10.5M11 7.5L8 10.5" stroke="#fff"/></svg>
<div class="t" style="left:982px;top:552px;font-size:8.2px;color:#fff">12:06 PM</div>
<div class="t" style="left:980px;top:563px;font-size:8.2px;color:#fff">1/27/2015</div>
</body></html>
